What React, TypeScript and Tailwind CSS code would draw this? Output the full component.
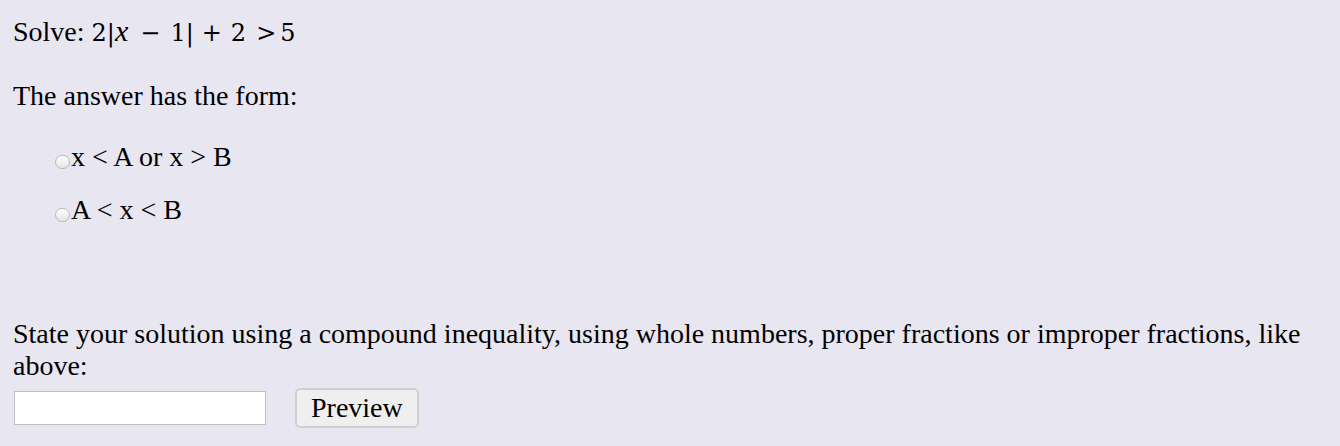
import React from "react";

function Radio() {
  return (
    <span className="inline-block w-[15px] h-[14px] rounded-full border border-[#b9b9b9] bg-gradient-to-b from-white to-[#e4e4e4] mr-[1px] translate-y-[5px] shrink-0" />
  );
}

const mathFont = { fontFamily: '"DejaVu Serif", serif' };

export default function App() {
  return (
    <div
      className="w-[1340px] h-[446px] bg-[#e8e6f1] text-black text-[28px] leading-[32px] px-[13px] pt-[15px] overflow-hidden"
      style={{ fontFamily: '"Liberation Serif", "Times New Roman", serif' }}
    >
      <div className="flex items-baseline">
        <span>Solve:&nbsp;</span>
        <span style={mathFont} className="text-[24px] flex items-baseline">
          <span>2</span>
          <span>|</span>
          <i style={{ fontFamily: '"Liberation Serif", serif' }} className="text-[30px]">x</i>
          <span className="ml-[12px]">−</span>
          <span className="ml-[10px]">1</span>
          <span>|</span>
          <span className="ml-[8px]">+</span>
          <span className="ml-[9px]">2</span>
          <span className="ml-[10px]">&gt;</span>
          <span className="ml-[4px]">5</span>
        </span>
      </div>

      <div className="mt-[31px]">The answer has the form:</div>

      <div className="pl-[42px] mt-[29px] flex flex-col gap-[21px]">
        <label className="flex items-center">
          <Radio />
          <span>x &lt; A or x &gt; B</span>
        </label>
        <label className="flex items-center">
          <Radio />
          <span>A &lt; x &lt; B</span>
        </label>
      </div>

      <div className="mt-[92px] pr-[20px]">
        State your solution using a compound inequality, using whole numbers, proper fractions or improper fractions, like above:
      </div>

      <div className="flex items-center mt-[6px] ml-[1px]">
        <input
          type="text"
          className="w-[252px] h-[34px] bg-white border border-[#bdbdc6] outline-none"
        />
        <button
          className="ml-[29px] h-[40px] px-[14px] rounded-[5px] border-2 border-[#cfcfcf] bg-[#efefef] text-[28px] leading-none"
          style={{ fontFamily: '"Liberation Serif", "Times New Roman", serif' }}
        >
          Preview
        </button>
      </div>
    </div>
  );
}
